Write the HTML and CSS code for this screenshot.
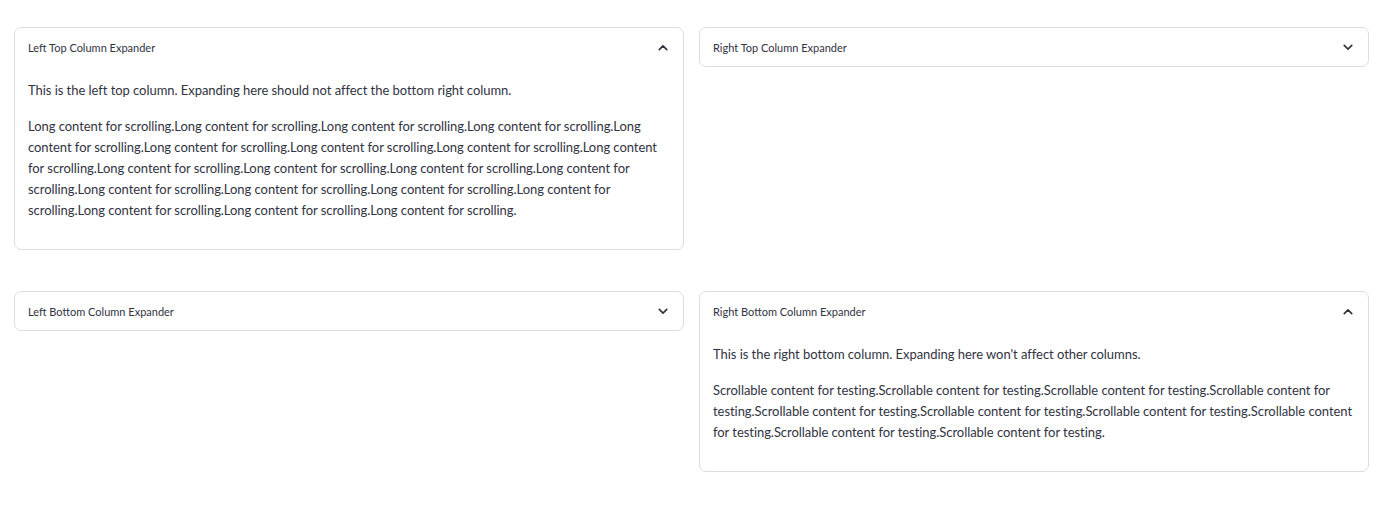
FILE: index.html
```html
<!DOCTYPE html>
<html lang="en">
<head>
  <meta charset="UTF-8" />
  <title>Expanders</title>
  <link rel="stylesheet" href="styles.css">
</head>
<body>
  <div class="page">
    <div class="row">
      <div class="expander open">
        <div class="summary">
          <span>Left Top Column Expander</span>
          <svg class="chev" viewBox="0 0 12 8" width="10" height="7"><path d="M1.5 6.5 L6 2 L10.5 6.5" /></svg>
        </div>
        <div class="details">
          <p>This is the left top column. Expanding here should not affect the bottom right column.</p>
          <p>Long content for scrolling.Long content for scrolling.Long content for scrolling.Long content for scrolling.Long content for scrolling.Long content for scrolling.Long content for scrolling.Long content for scrolling.Long content for scrolling.Long content for scrolling.Long content for scrolling.Long content for scrolling.Long content for scrolling.Long content for scrolling.Long content for scrolling.Long content for scrolling.Long content for scrolling.Long content for scrolling.Long content for scrolling.Long content for scrolling.</p>
        </div>
      </div>
      <div class="expander">
        <div class="summary">
          <span>Right Top Column Expander</span>
          <svg class="chev" viewBox="0 0 12 8" width="10" height="7"><path d="M1.5 1.5 L6 6 L10.5 1.5" /></svg>
        </div>
      </div>
    </div>

    <div class="row">
      <div class="expander">
        <div class="summary">
          <span>Left Bottom Column Expander</span>
          <svg class="chev" viewBox="0 0 12 8" width="10" height="7"><path d="M1.5 1.5 L6 6 L10.5 1.5" /></svg>
        </div>
      </div>
      <div class="expander open">
        <div class="summary">
          <span>Right Bottom Column Expander</span>
          <svg class="chev" viewBox="0 0 12 8" width="10" height="7"><path d="M1.5 6.5 L6 2 L10.5 6.5" /></svg>
        </div>
        <div class="details">
          <p>This is the right bottom column. Expanding here won't affect other columns.</p>
          <p>Scrollable content for testing.Scrollable content for testing.Scrollable content for testing.Scrollable content for testing.Scrollable content for testing.Scrollable content for testing.Scrollable content for testing.Scrollable content for testing.Scrollable content for testing.Scrollable content for testing.</p>
        </div>
      </div>
    </div>
  </div>
</body>
</html>
```

FILE: styles.css
```css
* {
  box-sizing: border-box;
}

body {
  margin: 0;
  font-family: 'Lato', 'Noto Sans', sans-serif;
  color: #31333f;
  background-color: #fff;
}

.page {
  padding: 27px 11px 0 14px;
  display: flex;
  flex-direction: column;
  gap: 41px;
}

.row {
  display: grid;
  grid-template-columns: 1fr 1fr;
  gap: 15px;
  align-items: start;
}

.expander {
  border: 1px solid #dcdde1;
  border-radius: 7px;
}

.summary {
  height: 38px;
  padding: 0 15px 0 13px;
  display: flex;
  align-items: center;
  justify-content: space-between;
  font-size: 11px;
}

.chev path {
  fill: none;
  stroke: #31333f;
  stroke-width: 2;
  stroke-linecap: round;
  stroke-linejoin: round;
}

.details {
  padding: 14px 13px 28px;
  font-size: 13px;
  letter-spacing: -0.05px;
  line-height: 21px;
}

.details p {
  margin: 0 0 15px;
}

.details p:last-child {
  margin-bottom: 0;
}
```
